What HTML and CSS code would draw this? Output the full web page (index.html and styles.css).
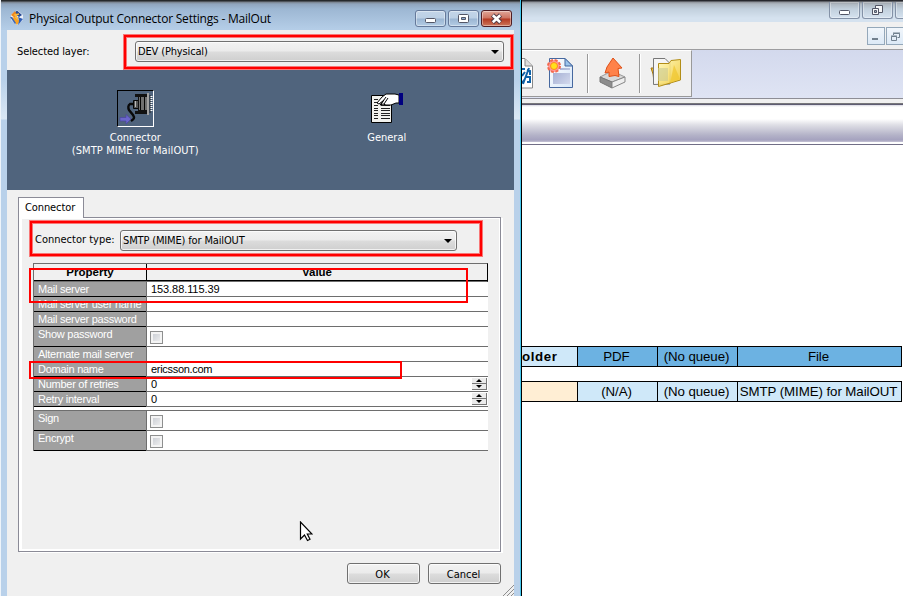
FILE: index.html
```html
<!DOCTYPE html>
<html lang="en">
<head>
  <meta charset="UTF-8">
  <meta name="viewport" content="width=device-width, initial-scale=1.0">
  <title>Physical Output Connector Settings</title>
  <link rel="stylesheet" href="styles.css">
</head>
<body>

  <div class="app">
    <div class="app-title">
      <span class="frame-btn"><svg width="29" height="17"><rect x="9.500" y="8.500" width="10" height="4" rx="1" fill="#fff" stroke="#535666"/></svg></span>
      <span class="frame-btn"><svg width="29" height="17"><path d="M12.500 3.500h7v7h-7z" fill="#f4f6f8" stroke="#535666"/><path d="M9.500 6.500h6v6h-6z" fill="#f4f6f8" stroke="#535666"/><path d="M11.500 8.500h2v2h-2z" fill="#9db0c0" stroke="#535666"/></svg></span>
      <span class="frame-btn"></span>
    </div>
    <div class="app-menu">
      <span class="mdi-btn"><svg width="16" height="16"><path d="M4 10h6v2H4z" fill="#71808e"/></svg></span>
      <span class="mdi-btn"><svg width="16" height="16"><path d="M6.500 7V5.500h6v4h-2M6 5h7M4.500 8.500h5v4h-5zM4 8h6" fill="none" stroke="#71808e"/></svg></span>
    </div>
    <div class="toolbar">
      <div class="tools">
        <span class="tool cut"><svg width="11" height="32" viewBox="0 0 11 32"><path d="M-4 1.500H3L10.500 9v22H-4z" fill="#fff" stroke="#888"/><path d="M3 2v7h7" fill="#ddd" stroke="#888"/><path d="M0 12h3M7 11L1 27M0 19l3-4M0 26l3-4M4 20h4v5H5M5 13l3 1v4" fill="none" stroke="#0e62a8" stroke-width="2"/></svg></span>
        <span class="tool doc"><svg width="28" height="32" viewBox="0 0 28 32">
          <defs>
            <linearGradient id="page" x1="0" y1="0" x2="1" y2="1"><stop offset="0" stop-color="#fff"/><stop offset="1" stop-color="#d7e6f8"/></linearGradient>
            <linearGradient id="block" x1="0" y1="0" x2="1" y2="1"><stop offset="0" stop-color="#9da9d0"/><stop offset="1" stop-color="#d3d9ed"/></linearGradient>
          </defs>
          <path d="M3.500 1.500H19L26.500 9v21.500h-23z" fill="url(#page)" stroke="#46689f"/>
          <path d="M19 1.500V9h7.500z" fill="#9cc4ec" stroke="#46689f"/>
          <path d="M14 11h10v2H14zM7 16h17v11H7z" fill="url(#block)"/>
          <circle cx="8" cy="9" r="6" fill="#f99" stroke="#f4694e" stroke-width="2" stroke-dasharray="3 1.700"/>
          <circle cx="8" cy="9" r="3.500" fill="#ffe01c" stroke="#ff8d19"/>
        </svg></span>
        <span class="divider"></span>
        <span class="tool up"><svg width="28" height="32" viewBox="0 0 28 32">
          <path d="M1 20l12-6 13 6-13 5z" fill="#d8d8d8" stroke="#999"/>
          <path d="M1 20l12 5v6L1 25z" fill="#8d8d8d" stroke="#777"/>
          <path d="M13 25l13-5v5l-13 6z" fill="#eee" stroke="#888"/>
          <path d="M14 1l9 10-4 .500 1 8-4-1-6 1V15l-4 1 2-6z" fill="#ff824a" stroke="#de5018"/>
        </svg></span>
        <span class="divider"></span>
        <span class="tool folder"><svg width="32" height="32" viewBox="0 0 32 32">
          <defs><linearGradient id="gold" x1="0" y1="0" x2="1" y2="1"><stop offset="0" stop-color="#fffab8"/><stop offset="1" stop-color="#f3c628"/></linearGradient></defs>
          <path d="M1 11h3v14l-1-8z" fill="#eebd33" stroke="#a57712"/>
          <path d="M3.500 1.500H15l5 5V27l-16.500 .500z" fill="#f5f5f5" stroke="#777"/>
          <path d="M8.500 6.500H19l2-3 9.500-1v20.500L8.500 29.500z" fill="url(#gold)" fill-opacity=".88" stroke="#b28d16"/>
          <path d="M24 8l6 14-10 4z" fill="#f0c62d" opacity=".7"/>
          <path d="M8 11h10v13H8z" fill="#c9c995" opacity=".6"/>
        </svg></span>
      </div>
    </div>
    <div class="ribbon"></div>
    <div class="sheet">
      <div class="grid-row head">
        <span class="c1">older</span><span class="c2">PDF</span><span class="c3">(No queue)</span><span class="c4">File</span>
      </div>
      <div class="grid-row">
        <span class="c1"></span><span class="c2">(N/A)</span><span class="c3">(No queue)</span><span class="c4">SMTP (MIME) for MailOUT</span>
      </div>
    </div>
  </div>

  <div class="dialog">
    <div class="titlebar">
      <svg class="logo" width="14" height="16" viewBox="0 0 14 16"><path d="M7 0l6 5v5l-6 5-6-5V5z" fill="#e9eef8"/><path d="M7 .500L12 5 9 7 4 3z" fill="#274a93"/><path d="M5 1L1 5l4 3 2-3z" fill="#f08a20"/><path d="M1 8l4-1 5 4-3 4z" fill="#f9a423"/><path d="M8 7l5 2-5 6 1-4z" fill="#2f5db5"/><path d="M0 7l2 0 4 6-1 1z" fill="#3a65b8"/><path d="M9 4l-4 1 3 4" fill="none" stroke="#f7b93f" stroke-width="1.500"/></svg>
      <span class="caption">Physical Output Connector Settings - MailOut</span>
      <div class="controls">
        <span class="ctl"><svg width="29" height="15"><rect x="9.500" y="7.500" width="10" height="4" rx="1" fill="#fff" stroke="#535666"/></svg></span>
        <span class="ctl"><svg width="29" height="15"><rect x="9.500" y="3.500" width="10" height="8" rx="1" fill="#fff" stroke="#535666"/><path d="M12.500 6.500h4v2h-4z" fill="#8facd0" stroke="#535666"/></svg></span>
        <span class="ctl close"><svg width="29" height="15"><path d="M10.500 4l8 7.500M18.500 4l-8 7.500" stroke="#513a45" stroke-width="4.500"/><path d="M10.800 4.300l7.400 6.900M18.200 4.300l-7.400 6.900" stroke="#fff" stroke-width="2.600"/></svg></span>
      </div>
    </div>

    <div class="client">
      <div class="layer">
        <label>Selected layer:</label>
        <div class="select">DEV (Physical)<i></i></div>
      </div>

      <div class="band">
        <div class="item">
          <div class="pic pressed"><svg width="35" height="35" viewBox="0 0 35 35">
            <path d="M16 13h-4c-2 1-2 4-1 6l4 5c2 3 1 4-2 6" fill="none" stroke="#080808" stroke-width="2.400"/>
            <path d="M15.500 9.500h5v8h-5z" fill="#555" stroke="#050505"/>
            <path d="M17.500 10v6" stroke="#bbb"/>
            <path d="M17 3h14v2h-2v15h2v3H17v-3h3V6h-3z" fill="#111"/>
            <path d="M21 6h8v13h-8z" fill="#707070"/>
            <path d="M22.500 6v13M26.500 6v13" stroke="#050505"/>
            <path d="M29 2h2v22h-2z" fill="#a2a2a2"/>
            <path d="M32 4v18" stroke="#222"/>
            <path d="M33.500 5v16" stroke="#fff" stroke-dasharray="1 1" stroke-width="2"/>
            <path d="M2 26.500h6v-3l5 4.500-5 5v-3H2z" fill="#6b66cb" stroke="#4a45a0" stroke-width=".700"/>
          </svg></div>
          <span>Connector</span>
          <span class="sub">(SMTP MIME for MailOUT)</span>
        </div>
        <div class="item">
          <div class="pic"><svg width="35" height="35" viewBox="0 0 35 35">
            <path d="M2.500 4.500h20v27h-20z" fill="#f2f2ee" stroke="#000"/>
            <path d="M5 8.500h4M5 11.500h4M5 14.500h4M5 17.500h4M5 19.500h4M5 22.500h4M5 24.500h4M5 27.500h4M12 14.500h9M12 17.500h9M12 19.500h9M12 22.500h9M12 24.500h9M12 27.500h9" stroke="#222"/>
            <path d="M8 12l5-6 4-3h9l4 1v8h-3l-5 2h-5l-3-1-3 1 4-5-5 4z" fill="#fff" stroke="#000"/>
            <path d="M12 13l5-7M15 13l4-6" stroke="#000"/>
            <path d="M30 2h4v12h-4z" fill="#000080"/>
          </svg></div>
          <span>General</span>
        </div>
      </div>

      <div class="body">
        <div class="tab">Connector</div>
        <div class="panel">
          <div class="type">
            <label>Connector type:</label>
            <div class="select">SMTP (MIME) for MailOUT<i></i></div>
          </div>
          <div class="props">
            <div class="row header"><div class="name">Property</div><div class="value">Value</div></div>
            <div class="row"><div class="name">Mail server</div><div class="value ip">153.88.115.39</div></div>
            <div class="row"><div class="name">Mail server user name</div><div class="value"></div></div>
            <div class="row"><div class="name">Mail server password</div><div class="value"></div></div>
            <div class="row tall"><div class="name">Show password</div><div class="value"><span class="check"></span></div></div>
            <div class="row"><div class="name">Alternate mail server</div><div class="value"></div></div>
            <div class="row"><div class="name">Domain name</div><div class="value">ericsson.com</div></div>
            <div class="row"><div class="name">Number of retries</div><div class="value">0<span class="spin"><i></i><i></i></span></div></div>
            <div class="row"><div class="name">Retry interval</div><div class="value">0<span class="spin"><i></i><i></i></span></div></div>
            <div class="row gap"></div>
            <div class="row tall"><div class="name">Sign</div><div class="value"><span class="check"></span></div></div>
            <div class="row tall"><div class="name">Encrypt</div><div class="value"><span class="check"></span></div></div>
          </div>
        </div>
        <div class="actions">
          <button>OK</button>
          <button>Cancel</button>
        </div>
      </div>
      <svg class="grip" width="11" height="11"><path d="M0 11L11 0M4 11l7-7M8 11l3-3" stroke="#8d8d8d"/></svg>
    </div>
  </div>

  <div class="mark soft mark-layer"></div>
  <div class="mark soft mark-type"></div>
  <div class="mark mark-server"></div>
  <div class="mark mark-domain"></div>

  <svg class="pointer" width="14" height="22" viewBox="0 0 14 22"><path d="M1.500 1v17l4-4 3 5.500 2.500-1.200-2.700-5.300h4.700z" fill="#fff" stroke="#000" stroke-width="1.200"/></svg>

</body>
</html>
```
FILE: styles.css
```css
* {
  box-sizing: border-box;
}

body {
  margin: 0;
  height: 596px;
  overflow: hidden;
  position: relative;
  background: #fff;
  font-family: "DejaVu Sans Condensed", "DejaVu Sans", sans-serif;
  font-size: 11px;
  color: #000;
}

svg {
  display: block;
}

/* application window behind the dialog */
.app {
  padding-left: 522px;
  height: 596px;
  overflow: hidden;
}

.app-title {
  height: 22px;
  display: flex;
  justify-content: flex-end;
  gap: 2px;
  padding-top: 2px;
  margin-right: -23px;
  background: linear-gradient(#1e1e22 0, #303238 1px, #8d9197 2px, #aeb7c0 4px, #c2d0dd 9px, #d5e2ef 18px, #d5e2ef 100%);
}

.frame-btn {
  width: 31px;
  height: 17px;
  border: 1px solid #8492a7;
  border-top: 0;
  border-radius: 0 0 3px 3px;
  box-shadow: inset 0 0 0 1px rgba(255, 255, 255, .35);
}

.app-menu {
  height: 27px;
  background: #f0f0f0;
  display: flex;
  justify-content: flex-end;
  gap: 1px;
  padding-top: 5px;
  margin-right: -1px;
}

.mdi-btn {
  width: 18px;
  height: 18px;
  border: 1px solid #94a8ba;
  background: linear-gradient(#f1f6fb, #dce9f6);
}

.toolbar {
  height: 50px;
  background: linear-gradient(#d3d9ed, #dfe4f4);
  border-top: 1px solid #9d9da0;
  border-bottom: 1px solid #8e8e96;
}

.tools {
  width: 170px;
  height: 47px;
  background: #f0f0f0;
  border-top: 1px solid #fff;
  border-right: 1px solid #999;
  border-bottom: 1px solid #999;
  display: flex;
  align-items: flex-start;
  padding-top: 6px;
}

.tool.doc {
  margin-left: 13px;
}

.divider {
  width: 2px;
  height: 39px;
  margin-top: -3px;
  margin-left: 13px;
  border-left: 1px solid #999;
  border-right: 1px solid #fff;
}

.tool.up {
  margin-left: 10px;
}

.tool.up + .divider {
  margin-left: 12px;
}

.tool.folder {
  margin-left: 9px;
}

.ribbon {
  height: 46px;
  background: linear-gradient(#f0f0f0 0, #f0f0f0 4px, #77777a 4px, #77777a 5px, #5e5c72 5px, #5e5c72 6px, #d8d8e2 6px, #fff 8px, #fff 20px, #dedee5 26px, #b4b3c8 36px, #a5a2bf 41px, #c6c4d6 43px, #fff 43px, #fff 45px, #716e87 45px);
}

.sheet {
  padding-top: 201px;
}

.grid-row {
  display: flex;
  width: 380px;
  height: 21px;
  border: 1px solid #000;
  border-left: 0;
  margin-bottom: 14px;
  font: 13.300px/19px "Liberation Sans", Arial, sans-serif;
  letter-spacing: -.08px;
  text-align: center;
  white-space: nowrap;
}

.grid-row span {
  background: #cfe8f9;
}

.grid-row span + span {
  border-left: 1px solid #000;
}

.grid-row .c1 {
  width: 55px;
  background: #ffeed4;
}

.grid-row .c2,
.grid-row .c3 {
  width: 80px;
  padding-right: 2px;
}

.grid-row .c4 {
  flex: 1;
  padding-right: 2px;
}

.grid-row.head span {
  background: #6cb2e2;
}

.grid-row.head .c1 {
  background: #cfe8f9;
  font-weight: bold;
  letter-spacing: .6px;
  text-align: left;
}

/* settings dialog */
.dialog {
  position: absolute;
  left: 0;
  top: 0;
  width: 522px;
  height: 596px;
  background: linear-gradient(#a3bfdc 0, #b9d1ea 30px, #b9d1ea 80px, #dbe8f5 119px, #b9d1ea 120px);
  border-left: 1px solid #eef4fa;
  border-right: 1px solid #000;
  box-shadow: inset -1px 0 #45c8ee;
  padding: 0 7px 0 6px;
}

.titlebar {
  height: 30px;
  margin: 0 -6px;
  padding: 10px 8px 0 9px;
  display: flex;
  background: linear-gradient(#26292c 0, #26292c 1px, #777f89 2px, #90a5bd 4px, #9db7d3 9px, #b4cde7 29px);
}

.caption {
  margin: 0 0 0 5px;
  font: 12px/17px "Open Sans", sans-serif;
  letter-spacing: -.22px;
  white-space: nowrap;
}

.controls {
  margin-left: auto;
  display: flex;
  gap: 2px;
}

.ctl {
  width: 31px;
  height: 17px;
  border: 1px solid #65799a;
  border-radius: 3px;
  background: linear-gradient(#c3d5e8 0, #bcd0e5 7px, #9bb6d3 8px, #b4cce4 100%);
  box-shadow: inset 0 0 0 1px rgba(255, 255, 255, .4);
}

.ctl.close {
  border-color: #4f1d24;
  background: linear-gradient(#e0a698 0, #cf7461 7px, #b43a23 8px, #cd765c 100%);
}

.client {
  height: 566px;
  background: #f0f0f0;
  position: relative;
}

.layer {
  height: 40px;
  padding: 11px 10px 0;
  display: flex;
}

.layer label {
  width: 118px;
  line-height: 22px;
  letter-spacing: -.1px;
}

.select {
  position: relative;
  height: 21px;
  border: 1px solid #707070;
  border-radius: 3px;
  background: linear-gradient(#f2f2f2 0, #ebebeb 9px, #dcdcdc 10px, #cfcfcf 100%);
  box-shadow: inset 0 0 0 1px rgba(255, 255, 255, .7);
  line-height: 20px;
  letter-spacing: -.15px;
  padding-left: 2px;
  white-space: nowrap;
}

.layer .select {
  width: 369px;
}

.select i {
  position: absolute;
  right: 4px;
  top: 8px;
  border: 4px solid transparent;
  border-top-color: #000;
  border-bottom: 0;
}

.band {
  height: 120px;
  background: #50647d;
  color: #fff;
  display: flex;
  justify-content: space-between;
  padding: 20px 1px 0;
}

.item {
  width: 254px;
  display: flex;
  flex-direction: column;
  align-items: center;
  line-height: 13px;
}

.item:first-child {
  padding-left: 2px;
}

.item .sub {
  letter-spacing: .08px;
}

.pic {
  width: 37px;
  height: 37px;
  padding: 1px;
  margin-bottom: 4px;
}

.pic.pressed {
  border: 1px solid #fff;
  border-top-color: #000;
  border-left-color: #000;
  padding: 0;
}

.body {
  padding: 7px 13px 0 11px;
}

.tab {
  width: 66px;
  height: 21px;
  margin-bottom: -1px;
  position: relative;
  background: #fff;
  border: 1px solid #8b8b97;
  border-bottom: 0;
  line-height: 19px;
  letter-spacing: -.1px;
  padding-left: 6px;
}

.panel {
  height: 335px;
  border: 1px solid #8b8b97;
  box-shadow: inset 3px 1px #fff, inset -1px -2px #fff, 2px 1px #fff;
  padding: 12px 12px 0 14px;
}

.type {
  display: flex;
  padding-left: 2px;
  height: 33px;
}

.type label {
  width: 85px;
  line-height: 20px;
  white-space: nowrap;
}

.type .select {
  width: 337px;
}

.props {
  width: 455px;
  background: #fff;
  border-left: 1px solid #6e6e6e;
  font: 11px/15px "Liberation Sans", Arial, sans-serif;
}

.row {
  display: flex;
  height: 15px;
}

.row .name {
  width: 112px;
  background: #a0a0a0;
  color: #fff;
  border-bottom: 1px solid #000;
  padding-left: 4px;
  letter-spacing: -.26px;
  white-space: nowrap;
}

.row .value {
  flex: 1;
  display: flex;
  border-left: 1px solid #6e6e6e;
  border-bottom: 1px solid #6e6e6e;
  padding-left: 4px;
  letter-spacing: -.3px;
}

.row .value.ip {
  letter-spacing: -.08px;
}

.row.tall {
  height: 20px;
}

.row.gap {
  height: 4px;
  border-bottom: 1px solid #6e6e6e;
}

.row.header {
  height: 19px;
  background: #f0f0f0;
  border-top: 1px solid #6e6e6e;
  border-right: 1px solid #000;
  border-bottom: 1px solid #6e6e6e;
  font-size: 11.500px;
  font-weight: bold;
  line-height: 17px;
  text-align: center;
}

.row.header .name,
.row.header .value {
  background: none;
  color: #000;
  display: block;
  border-color: #000;
  padding: 0;
  letter-spacing: 0;
}

.check {
  width: 13px;
  height: 13px;
  margin: 4px 0 0 -1px;
  border: 1px solid #8e8f8f;
  background: linear-gradient(135deg, #c5c9d0, #f4f4f4);
  box-shadow: inset 0 0 0 2px #f4f4f4;
}

.spin {
  width: 15px;
  height: 13px;
  margin: 1px 1px 0 auto;
}

.spin i {
  display: flex;
  justify-content: center;
  align-items: center;
  height: 6px;
  background: #ececec;
  border-right: 1px solid #777;
  border-bottom: 1px solid #777;
}

.spin i::before {
  content: "";
  border: 3px solid transparent;
  border-bottom-color: #000;
  border-top: 0;
}

.spin i + i::before {
  border-top: 3px solid #000;
  border-bottom: 0;
}

.actions {
  display: flex;
  justify-content: flex-end;
  gap: 8px;
  padding-top: 11px;
}

.actions button {
  width: 73px;
  height: 21px;
  padding: 1px 2px 0 0;
  border: 1px solid #707070;
  border-radius: 3px;
  background: linear-gradient(#f2f2f2 0, #ebebeb 9px, #dcdcdc 10px, #cfcfcf 100%);
  box-shadow: inset 0 0 0 1px rgba(255, 255, 255, .7);
  font: inherit;
}

.grip {
  position: absolute;
  right: 0;
  bottom: 0;
}

/* highlight boxes drawn over the form */
.mark {
  position: absolute;
  border: 2px solid #f00;
}

.mark.soft {
  box-shadow: 0 0 0 1px rgba(255, 0, 0, .5), inset 0 0 0 1px rgba(255, 0, 0, .5);
}

.mark-layer {
  left: 124px;
  top: 35px;
  width: 389px;
  height: 34px;
}

.mark-type {
  left: 30px;
  top: 221px;
  width: 452px;
  height: 35px;
}

.mark-server {
  left: 29px;
  top: 268px;
  width: 439px;
  height: 35px;
}

.mark-domain {
  left: 29px;
  top: 361px;
  width: 373px;
  height: 18px;
}

.pointer {
  position: absolute;
  left: 299px;
  top: 521px;
}
```
